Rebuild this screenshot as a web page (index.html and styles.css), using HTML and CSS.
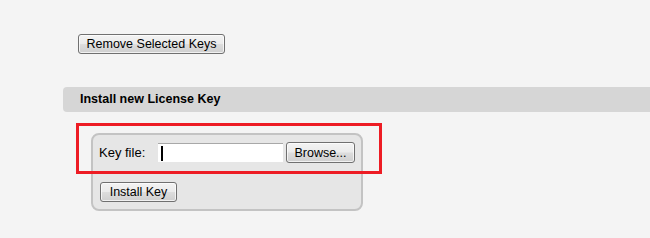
FILE: index.html
```html
<!DOCTYPE html>
<html lang="en">
<head>
    <meta charset="UTF-8">
    <title>License Keys</title>
    <link rel="stylesheet" href="styles.css">
</head>
<body>
    <div class="actions">
        <button class="btn btn-remove">Remove Selected Keys</button>
    </div>

    <h2 class="section-title">Install new License Key</h2>

    <div class="install">
        <!-- highlight box drawn over the form -->
        <div class="highlight"></div>
        <div class="panel">
            <div class="row">
                <span class="label">Key file:</span>
                <div class="field"><span class="caret"></span></div>
                <button class="btn btn-browse">Browse...</button>
            </div>
            <div class="row row-submit">
                <button class="btn btn-install">Install Key</button>
            </div>
        </div>
    </div>
</body>
</html>
```

FILE: styles.css
```css
body {
    background-color: #f4f4f4;
    margin: 0;
    padding: 0;
    font-family: "Liberation Sans", Arial, sans-serif;
    font-size: 13px;
    color: #000;
}

.actions {
    padding: 34px 0 0 78px;
}

.btn {
    font-family: "Liberation Sans", Arial, sans-serif;
    font-size: 12.5px;
    color: #000;
    background: linear-gradient(#f3f3f3 0%, #ebebeb 48%, #dddddd 52%, #cfcfcf 100%);
    border: 1px solid #707070;
    border-radius: 3px;
    padding: 0;
    margin: 0;
    box-sizing: border-box;
    box-shadow: inset 0 0 0 1px rgba(255, 255, 255, 0.7);
    display: block;
}

.btn-remove {
    width: 147px;
    height: 20px;
}

.section-title {
    margin: 33px 0 0 63px;
    height: 25px;
    line-height: 25px;
    padding-left: 17px;
    background-color: #d6d6d6;
    border-radius: 4px 0 0 4px;
    font-size: 12.5px;
    font-weight: bold;
}

.install {
    position: relative;
    padding: 21px 0 0 91px;
}

.highlight {
    position: absolute;
    left: 76px;
    top: 11px;
    width: 306px;
    height: 51px;
    border: 3px solid #ed1c24;
    box-sizing: border-box;
}

.panel {
    width: 272px;
    box-sizing: border-box;
    background-color: #e6e6e6;
    border: 2px solid #c3c3c3;
    border-radius: 8px;
    padding: 7px 6px 7px 6px;
}

.row {
    display: flex;
    align-items: center;
    height: 21px;
}

.label {
    width: 59px;
}

.field {
    width: 125px;
    height: 19px;
    background-color: #fff;
    border-top: 1px solid #a8a8a8;
    box-sizing: border-box;
    display: flex;
    align-items: center;
    padding-left: 3px;
}

.caret {
    width: 2px;
    height: 15px;
    background-color: #000;
}

.btn-browse {
    width: 69px;
    height: 21px;
    margin-left: 3px;
}

.row-submit {
    margin-top: 19px;
    height: 20px;
}

.btn-install {
    width: 77px;
    height: 20px;
    margin-left: 1px;
}
```
